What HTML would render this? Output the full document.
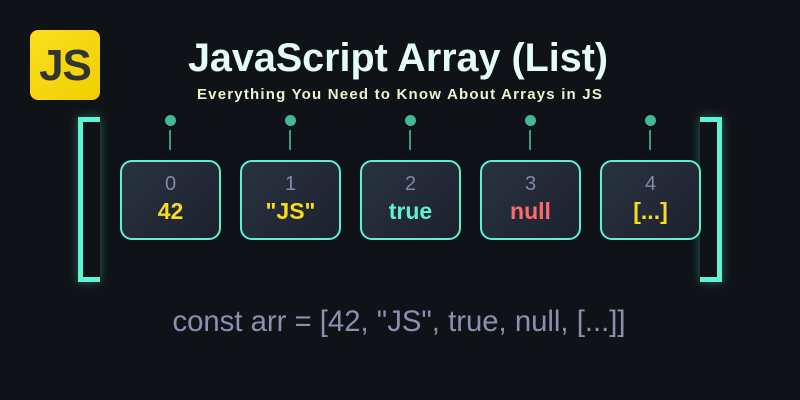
<!DOCTYPE html>
<html><head><meta charset="utf-8"><style>
body{margin:0;width:800px;height:400px;background:#0f1318;font-family:"Liberation Sans",sans-serif;position:relative;overflow:hidden}
.abs{position:absolute}
.logo{left:30px;top:30px;width:70px;height:70px;border-radius:8px;background:linear-gradient(135deg,#fadf1f,#f0cf00);color:#333;font-weight:bold;font-size:44px;line-height:72px;text-align:center;letter-spacing:-1px}
.title{left:0;width:796px;top:36px;text-align:center;color:#e4fbf8;font-weight:bold;font-size:39.5px;white-space:nowrap}
.sub{left:0;width:800px;top:86px;text-align:center;color:#e6f6d2;font-weight:bold;font-size:15px;letter-spacing:1.2px;white-space:nowrap}
.br{border:5px solid #5ef5d2;width:17px;top:117px;height:155px;box-shadow:0 0 10px rgba(94,245,210,.35)}
.bl{left:78px;border-right:none}
.bri{left:700px;border-left:none}
.box{top:160px;width:97px;height:76px;border:2px solid #5ef0cf;border-radius:12px;background:linear-gradient(135deg,#2a3242,#1c212d);text-align:center}
.idx{color:#8288a6;font-size:20px;margin-top:11px}
.val{font-weight:bold;font-size:23px;margin-top:2px}
.dot{top:115px;width:11px;height:11px;border-radius:50%;background:#45b69a}
.ln{top:130px;width:2px;height:20px;background:#3a9a82}
.code{left:0;width:798px;top:305px;text-align:center;color:#8a90b0;font-size:29.3px;white-space:nowrap}
</style></head><body>
<div class="abs logo">JS</div>
<div class="abs title">JavaScript Array (List)</div>
<div class="abs sub">Everything You Need to Know About Arrays in JS</div>
<div class="abs br bl"></div>
<div class="abs br bri"></div>

<div class="abs dot" style="left:165px"></div><div class="abs ln" style="left:169px"></div>
<div class="abs dot" style="left:285px"></div><div class="abs ln" style="left:289px"></div>
<div class="abs dot" style="left:405px"></div><div class="abs ln" style="left:409px"></div>
<div class="abs dot" style="left:525px"></div><div class="abs ln" style="left:529px"></div>
<div class="abs dot" style="left:645px"></div><div class="abs ln" style="left:649px"></div>

<div class="abs box" style="left:120px"><div class="idx">0</div><div class="val" style="color:#f9dc1c">42</div></div>
<div class="abs box" style="left:240px"><div class="idx">1</div><div class="val" style="color:#f9dc1c">"JS"</div></div>
<div class="abs box" style="left:360px"><div class="idx">2</div><div class="val" style="color:#5ef0cf">true</div></div>
<div class="abs box" style="left:480px"><div class="idx">3</div><div class="val" style="color:#ff6b6b">null</div></div>
<div class="abs box" style="left:600px"><div class="idx">4</div><div class="val" style="color:#f9dc1c">[...]</div></div>

<div class="abs code">const arr = [42, "JS", true, null, [...]]</div>
</body></html>
